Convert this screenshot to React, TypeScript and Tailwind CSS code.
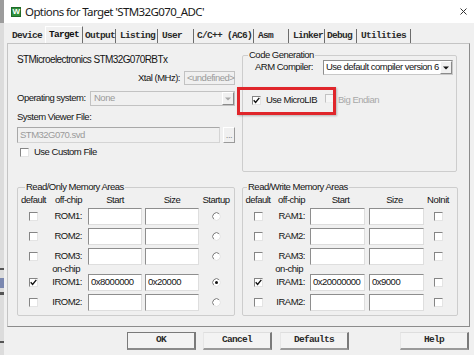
import React from "react";

function Check({ checked = false, disabled = false }: { checked?: boolean; disabled?: boolean }) {
  return (
    <span
      className={
        disabled
          ? "inline-flex w-[9px] h-[9px] shrink-0 items-center justify-center border border-t-[#c2c2c2] border-l-[#c2c2c2] border-r-[#ececec] border-b-[#ececec] bg-[#f6f6f6]"
          : "inline-flex w-[9px] h-[9px] shrink-0 items-center justify-center border border-t-[#858585] border-l-[#858585] border-r-[#e4e4e4] border-b-[#e4e4e4] bg-white"
      }
    >
      {checked && (
        <svg width="7" height="7" viewBox="0 0 7 7">
          <path d="M0.7 3.3 L2.6 5.4 L6.3 0.9" fill="none" stroke="#111" strokeWidth="1.4" />
        </svg>
      )}
    </span>
  );
}

function Radio({ on = false }: { on?: boolean }) {
  return (
    <svg width="9" height="9" viewBox="0 0 9 9">
      <circle cx="4.5" cy="4.5" r="3.8" fill="#fff" />
      <path d="M1.8 7.2 A3.8 3.8 0 0 1 7.2 1.8" fill="none" stroke="#7c7c7c" strokeWidth="1" />
      <path d="M7.2 1.8 A3.8 3.8 0 0 1 1.8 7.2" fill="none" stroke="#e4e4e4" strokeWidth="1" />
      {on && <circle cx="4.5" cy="4.5" r="1.5" fill="#111" />}
    </svg>
  );
}

function Box({ className, text }: { className: string; text?: string }) {
  return (
    <div
      className={
        "flex items-center pl-[2px] bg-white border border-t-[#8e8e8e] border-l-[#8e8e8e] border-r-[#dedede] border-b-[#dedede] " +
        className
      }
    >
      {text}
    </div>
  );
}

function DropBtn({ disabled = false }: { disabled?: boolean }) {
  return (
    <div className="ml-auto flex h-full w-[12px] items-center justify-center bg-[#f0f0f0] border-l border-t border-l-[#ffffff] border-t-[#ffffff] border-r border-b border-r-[#8a8a8a] border-b-[#8a8a8a]">
      <svg width="6" height="4" viewBox="0 0 6 4">
        <path d="M0 0.5 L6 0.5 L3 3.5 Z" fill={disabled ? "#a8a8a8" : "#111"} />
      </svg>
    </div>
  );
}

const romRows = [
  { name: "ROM1:", start: "", size: "", checked: false, on: false },
  { name: "ROM2:", start: "", size: "", checked: false, on: false },
  { name: "ROM3:", start: "", size: "", checked: false, on: false },
];
const iromRows = [
  { name: "IROM1:", start: "0x8000000", size: "0x20000", checked: true, on: true },
  { name: "IROM2:", start: "", size: "", checked: false, on: false },
];
const ramRows = [
  { name: "RAM1:", start: "", size: "", checked: false },
  { name: "RAM2:", start: "", size: "", checked: false },
  { name: "RAM3:", start: "", size: "", checked: false },
];
const iramRows = [
  { name: "IRAM1:", start: "0x20000000", size: "0x9000", checked: true },
  { name: "IRAM2:", start: "", size: "", checked: false },
];

function RomRow({ r }: { r: { name: string; start: string; size: string; checked: boolean; on: boolean } }) {
  return (
    <div className="mt-[3px] grid h-[17px] grid-cols-[31px_39px_54px_57px_34px] items-center">
      <div className="flex justify-center">
        <Check checked={r.checked} />
      </div>
      <div className="pr-[6px] text-right">{r.name}</div>
      <Box className="h-[17px] w-[54px]" text={r.start} />
      <Box className="ml-[3px] h-[17px] w-[54px]" text={r.size} />
      <div className="flex justify-center">
        <Radio on={r.on} />
      </div>
    </div>
  );
}

function RamRow({ r }: { r: { name: string; start: string; size: string; checked: boolean } }) {
  return (
    <div className="mt-[3px] grid h-[17px] grid-cols-[30px_37px_55px_59px_28px] items-center">
      <div className="flex justify-center">
        <Check checked={r.checked} />
      </div>
      <div className="pr-[5px] text-right">{r.name}</div>
      <Box className="h-[17px] w-[55px]" text={r.start} />
      <Box className="ml-[4px] h-[17px] w-[55px]" text={r.size} />
      <div className="flex justify-center">
        <Check />
      </div>
    </div>
  );
}

const tabs = [
  { t: "Device", cls: "w-[38px] pl-[5px]" },
  { t: "Target", cls: "w-[38px] pl-[3px]", sel: true },
  { t: "Output", cls: "w-[33px] pl-[2px] border-r border-r-[#6c6c6c]" },
  { t: "Listing", cls: "w-[42px] pl-[4px] border-r border-r-[#6c6c6c]" },
  { t: "User", cls: "w-[36px] pl-[4px] border-r border-r-[#6c6c6c]" },
  { t: "C/C++ (AC6)", cls: "w-[60px] pl-[3px] border-r border-r-[#6c6c6c]" },
  { t: "Asm", cls: "w-[35px] pl-[4px] border-r border-r-[#6c6c6c]" },
  { t: "Linker", cls: "w-[36px] pl-[4px] border-r border-r-[#6c6c6c]" },
  { t: "Debug", cls: "w-[32px] pl-[2px] border-r border-r-[#6c6c6c]" },
  { t: "Utilities", cls: "w-[54px] pl-[4px] border-r border-r-[#6c6c6c]" },
];

const btnCls =
  "flex h-[18px] w-[69px] items-center justify-center bg-[#f3f3f3] border-t border-l border-t-[#dedede] border-l-[#e6e6e6] border-r-2 border-b-2 border-r-[#7a7a7a] border-b-[#9a9a9a]";

export default function App() {
  return (
    <div className="flex h-[355px] w-[474px] overflow-hidden bg-[#f0f0f0] font-['Liberation_Sans',Arial,sans-serif] text-[9.5px] tracking-[-0.5px] text-[#141414]">
      {/* background window sliver */}
      <div className="flex w-[4px] shrink-0 flex-col bg-[#dcdcdc]">
        <div className="h-[23px] bg-[#9c9c9c]" />
        <div className="h-[245px]" />
        <div className="h-[2px] bg-[#555]" />
        <div className="h-[8px]" />
        <div className="h-[10px] bg-[#7b88b0]" />
        <div className="h-[4px]" />
        <div className="h-[3px] bg-[#555]" />
        <div className="h-[46px]" />
        <div className="h-[2px] bg-[#555]" />
      </div>

      <div className="flex flex-1 flex-col">
        {/* title bar */}
        <div className="flex h-[23px] shrink-0 items-center bg-white">
          <div className="ml-[7px] flex h-[10px] w-[10px] items-center justify-center bg-[#2f8f3a] border border-[#1d6a28]">
            <span className="font-['Liberation_Sans',Arial,sans-serif] text-[8px] font-bold leading-none tracking-[-0.5px] text-white">W</span>
          </div>
          <div className="ml-[4px] font-['Noto_Sans',sans-serif] text-[11.5px] tracking-[-0.6px] text-[#1a1a1a]">
            Options for Target 'STM32G070_ADC'
          </div>
          <svg className="ml-auto mr-[7px]" width="7" height="7" viewBox="0 0 7 7">
            <path d="M0.5 0.5 L6.5 6.5 M6.5 0.5 L0.5 6.5" stroke="#333" strokeWidth="1" />
          </svg>
        </div>

        {/* tabs */}
        <div className="ml-[3px] mt-[4px] flex h-[16px] shrink-0 items-end font-['Liberation_Mono',monospace] text-[9.5px] font-bold tracking-[-0.7px] text-[#2a2a2a]">
          {tabs.map((tb) =>
            tb.sel ? (
              <div
                key={tb.t}
                className="relative top-[1px] flex h-[18px] w-[38px] items-center pl-[3px] bg-[#f0f0f0] border-l border-t border-l-[#ffffff] border-t-[#ffffff] border-r border-r-[#6c6c6c] text-[#111]"
              >
                {tb.t}
              </div>
            ) : (
              <div key={tb.t} className={"flex h-[14px] items-center " + tb.cls}>
                {tb.t}
              </div>
            )
          )}
        </div>

        {/* tab panel */}
        <div className="relative ml-[3px] flex h-[284px] w-[463px] shrink-0 flex-col border border-l-[#c4c4c4] border-t-[#c4c4c4] border-r-[#8c8c8c] border-b-[#8c8c8c] pl-[9px]">
          {/* top section */}
          <div className="flex">
            <div className="flex w-[218px] flex-col">
              <div className="mt-[10px] h-[12px] text-[10px] leading-[12px] tracking-[-0.6px]">STMicroelectronics STM32G070RBTx</div>
              <div className="mt-[5px] flex h-[14px] items-center justify-end gap-[4px]">
                <span>Xtal (MHz):</span>
                <div className="flex h-[14px] w-[51px] items-center pl-[2px] text-[#9a9a9a] bg-[#f0f0f0] border border-[#c2c2c2]">
                  &lt;undefined&gt;
                </div>
              </div>
              <div className="mt-[6px] flex h-[15px] items-center">
                <span>Operating system:</span>
                <div className="ml-auto flex h-[15px] w-[145px] items-center bg-[#f0f0f0] border border-[#c2c2c2]">
                  <span className="pl-[3px] text-[#9a9a9a]">None</span>
                  <DropBtn disabled />
                </div>
              </div>
              <div className="mt-[5px] h-[12px] leading-[12px]">System Viewer File:</div>
              <div className="mt-[4px] flex h-[16px] items-center">
                <div className="flex h-[16px] w-[203px] items-center pl-[2px] text-[#9a9a9a] bg-[#f0f0f0] border border-t-[#a8a8a8] border-l-[#a8a8a8] border-r-[#d4d4d4] border-b-[#d4d4d4]">
                  STM32G070.svd
                </div>
                <div className="ml-auto flex h-[16px] w-[12px] items-center justify-center text-[#8a8a8a] bg-[#f0f0f0] border border-l-[#ffffff] border-t-[#ffffff] border-r-[#9a9a9a] border-b-[#9a9a9a]">
                  ...
                </div>
              </div>
              <div className="mt-[4px] flex h-[10px] items-center pl-[3px]">
                <Check />
                <span className="ml-[5px]">Use Custom File</span>
              </div>
            </div>

            <fieldset className="ml-[7px] mt-[6px] h-[122px] w-[215px] rounded-[2px] border border-[#cdcdcd]">
              <legend className="ml-[5px] px-[1px] leading-[10px]">Code Generation</legend>
              <div className="flex h-[15px] items-center">
                <span className="pl-[12px]">ARM Compiler:</span>
                <div className="ml-auto mr-[3px] flex h-[15px] w-[130px] items-center bg-white border border-t-[#8e8e8e] border-l-[#8e8e8e] border-r-[#c8c8c8] border-b-[#c8c8c8]">
                  <span className="pl-[2px]">Use default compiler version 6</span>
                  <DropBtn />
                </div>
              </div>
              <div className="mt-[20px] flex h-[10px] items-center pl-[9px]">
                <Check checked />
                <span className="ml-[5px]">Use MicroLIB</span>
                <span className="ml-[8px]">
                  <Check disabled />
                </span>
                <span className="ml-[4px] text-[#a8a8a8]">Big Endian</span>
              </div>
            </fieldset>
          </div>

          {/* memory areas */}
          <div className="mt-[9px] flex">
            <fieldset className="h-[135px] w-[218px] rounded-[2px] border border-[#cdcdcd]">
              <legend className="ml-[7px] px-[1px] leading-[12px]">Read/Only Memory Areas</legend>
              <div className="mt-[2px] grid h-[10px] grid-cols-[31px_39px_54px_57px_34px] items-center leading-[10px]">
                <div className="text-center">default</div>
                <div className="pr-[6px] text-right">off-chip</div>
                <div className="text-center">Start</div>
                <div className="pl-[3px] text-center">Size</div>
                <div className="text-center">Startup</div>
              </div>
              {romRows.map((r) => (
                <RomRow key={r.name} r={r} />
              ))}
              <div className="grid h-[8px] grid-cols-[31px_39px] items-center leading-[8px]">
                <div />
                <div className="pr-[8px] text-right">on-chip</div>
              </div>
              <div className="-mt-[2px]">
                {iromRows.map((r) => (
                  <RomRow key={r.name} r={r} />
                ))}
              </div>
            </fieldset>

            <fieldset className="ml-[7px] h-[135px] w-[216px] rounded-[2px] border border-[#cdcdcd]">
              <legend className="ml-[4px] px-[1px] leading-[12px]">Read/Write Memory Areas</legend>
              <div className="mt-[2px] grid h-[10px] grid-cols-[30px_37px_55px_59px_28px] items-center leading-[10px]">
                <div className="text-center">default</div>
                <div className="pr-[5px] text-right">off-chip</div>
                <div className="pl-[6px] text-center">Start</div>
                <div className="text-center">Size</div>
                <div className="text-center">NoInit</div>
              </div>
              {ramRows.map((r) => (
                <RamRow key={r.name} r={r} />
              ))}
              <div className="grid h-[8px] grid-cols-[30px_37px] items-center leading-[8px]">
                <div />
                <div className="pr-[7px] text-right">on-chip</div>
              </div>
              <div className="-mt-[2px]">
                {iramRows.map((r) => (
                  <RamRow key={r.name} r={r} />
                ))}
              </div>
            </fieldset>
          </div>

          {/* highlight annotation */}
          <div className="absolute left-[229px] top-[43px] h-[28px] w-[99px] border-[3px] border-[#e0262b] shadow-[1px_1px_2px_rgba(0,0,0,0.25)]" />
        </div>

        {/* buttons */}
        <div className="mt-[5px] flex h-[18px] font-['Liberation_Mono',monospace] text-[9.5px] font-bold tracking-[-0.7px] text-[#2a2a2a]">
          <div className="ml-[123px] flex h-[18px] w-[69px] items-center justify-center bg-[#f3f3f3] border border-[#7a7a7a] border-r-2 border-b-2 border-r-[#7a7a7a] border-b-[#8a8a8a]">
            OK
          </div>
          <div className={"ml-[7px] " + btnCls}>Cancel</div>
          <div className={"ml-[8px] " + btnCls}>Defaults</div>
          <div className={"ml-[51px] " + btnCls}>Help</div>
        </div>
      </div>
    </div>
  );
}
